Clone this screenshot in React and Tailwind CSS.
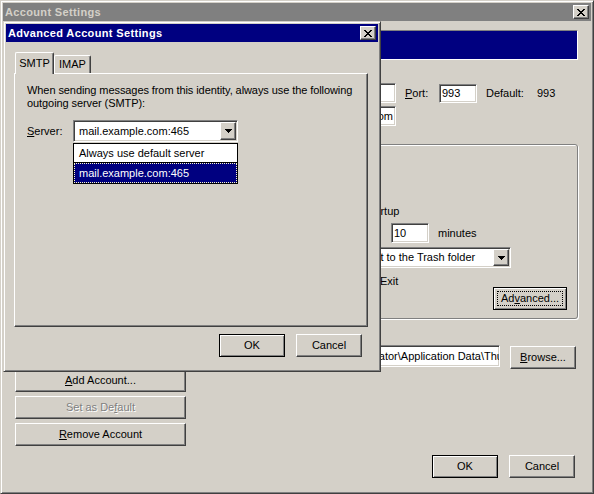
import React from 'react'

// classic win2k bevels
const raised =
  'border border-t-white border-l-white border-r-[#404040] border-b-[#404040] shadow-[inset_-1px_-1px_0_#808080,inset_1px_1px_0_#d4d0c8]'
const sunken =
  'border border-t-[#808080] border-l-[#808080] border-r-white border-b-white shadow-[inset_1px_1px_0_#404040,inset_-1px_-1px_0_#d4d0c8]'
const frame =
  'border border-t-[#d4d0c8] border-l-[#d4d0c8] border-r-[#404040] border-b-[#404040] shadow-[inset_1px_1px_0_#fff,inset_-1px_-1px_0_#808080]'

function XGlyph() {
  const px = [
    [0, 0, 2], [6, 0, 2],
    [1, 1, 2], [5, 1, 2],
    [2, 2, 4],
    [3, 3, 2],
    [2, 4, 4],
    [1, 5, 2], [5, 5, 2],
    [0, 6, 2], [6, 6, 2],
  ]
  return (
    <svg width="8" height="7" viewBox="0 0 8 7" shapeRendering="crispEdges">
      {px.map(([x, y, w], i) => (
        <rect key={i} x={x} y={y} width={w} height="1" fill="#000" />
      ))}
    </svg>
  )
}

function ArrowGlyph() {
  return (
    <svg width="7" height="4" viewBox="0 0 7 4" shapeRendering="crispEdges">
      <rect x="0" y="0" width="7" height="1" fill="#000" />
      <rect x="1" y="1" width="5" height="1" fill="#000" />
      <rect x="2" y="2" width="3" height="1" fill="#000" />
      <rect x="3" y="3" width="1" height="1" fill="#000" />
    </svg>
  )
}

function CaptionX() {
  return (
    <div className={`flex h-[14px] w-[16px] items-center justify-center bg-[#d4d0c8] ${raised}`}>
      <XGlyph />
    </div>
  )
}

function Btn({ children, def, focus, disabled, className = '' }) {
  const bevel = def
    ? 'border border-black shadow-[inset_1px_1px_0_#fff,inset_-1px_-1px_0_#808080]'
    : raised
  return (
    <div
      className={`relative flex h-[23px] shrink-0 items-center justify-center bg-[#d4d0c8] ${bevel} ${
        disabled ? 'text-[#808080] [text-shadow:1px_1px_0_#fff]' : ''
      } ${className}`}
    >
      {focus && <span className="pointer-events-none absolute inset-[3px] border border-dotted border-black" />}
      {children}
    </div>
  )
}

function Field({ children, className = '', right }) {
  return (
    <div
      className={`flex shrink-0 items-center overflow-hidden whitespace-nowrap bg-white ${
        right ? 'justify-end pr-[2px]' : 'pl-[2px]'
      } ${sunken} ${className}`}
    >
      {children}
    </div>
  )
}

function Combo({ children, className = '', textClass = 'pl-[4px]' }) {
  return (
    <div className={`flex shrink-0 items-stretch bg-white p-[1px] ${sunken} ${className}`}>
      <span className={`flex flex-1 items-center overflow-hidden whitespace-nowrap ${textClass}`}>{children}</span>
      <div className={`flex w-[16px] items-center justify-center bg-[#d4d0c8] ${raised}`}>
        <ArrowGlyph />
      </div>
    </div>
  )
}

function Check({ checked }) {
  return (
    <div className={`mr-[5px] flex h-[13px] w-[13px] shrink-0 items-center justify-center bg-white ${sunken}`}>
      {checked && (
        <svg width="7" height="7" viewBox="0 0 7 7">
          <path d="M0 3 L2 5 L7 0 L7 2 L2 7 L0 5 Z" fill="#000" />
        </svg>
      )}
    </div>
  )
}

const U = ({ children }) => <span className="underline underline-offset-1">{children}</span>

export default function App() {
  return (
    <div className="relative h-[494px] w-[594px] select-none overflow-hidden bg-[#d4d0c8] font-['Liberation_Sans',Arial,sans-serif] text-[11px] leading-[13px] text-black">
      {/* background window */}
      <div className={`flex h-full flex-col p-[2px] ${frame}`}>
        <div className="flex h-[18px] items-center justify-between bg-[#808080] px-[2px]">
          <span className="font-bold tracking-[0.35px] text-[#d4d0c8]">Account Settings</span>
          <CaptionX />
        </div>

        <div className="flex flex-col pl-[12px] pr-[13px] pt-[9px]">
          <div className="flex">
            {/* account list + buttons */}
            <div className="flex w-[171px] shrink-0 flex-col">
              <div className={`h-[335px] bg-white ${sunken}`} />
              <div className="mt-[4px] flex flex-col gap-[4px]">
                <Btn>
                  <span><U>A</U>dd Account...</span>
                </Btn>
                <Btn disabled>
                  <span>Set as De<U>f</U>ault</span>
                </Btn>
                <Btn>
                  <span><U>R</U>emove Account</span>
                </Btn>
              </div>
            </div>

            {/* settings page (left part sits under the dialog) */}
            <div className="ml-[10px] flex w-[382px] flex-col">
              <div className="h-[30px] border border-t-[#808080] border-l-[#808080] border-r-white border-b-white bg-[#000080]" />

              <div className="mt-[23px] flex h-[20px] items-center">
                <span className="w-[74px] shrink-0" />
                <Field className="h-[20px] w-[126px]" />
                <span className="ml-[9px] w-[34px] shrink-0"><U>P</U>ort:</span>
                <Field className="h-[19px] w-[38px]">993</Field>
                <span className="ml-[9px] w-[51px] shrink-0">Default:</span>
                <span>993</span>
              </div>

              <div className="mt-[3px] flex h-[20px] items-center">
                <span className="w-[74px] shrink-0" />
                <Field right className="h-[20px] w-[126px]">user@example.com</Field>
              </div>

              <div className="mt-[18px] flex flex-col rounded-[3px] border border-[#808080] pb-[8px] pl-[8px] pt-[6px] shadow-[inset_1px_1px_0_#fff,1px_1px_0_#fff]">
                <div className="flex h-[24px] items-center">
                  <Check />
                </div>
                <div className="flex h-[24px] items-center">
                  <Check />
                </div>
                <div className="flex h-[24px] items-center">
                  <Check checked />
                  <span className="whitespace-nowrap pl-[4px]">Check for new messages at startup</span>
                </div>
                <div className="flex h-[20px] items-center">
                  <Check checked />
                  <span className="w-[168px] shrink-0" />
                  <Field className="h-[20px] w-[38px]">10</Field>
                  <span className="ml-[9px]">minutes</span>
                </div>
                <div className="mt-[4px] flex h-[21px] items-center">
                  <span className="w-[141px] shrink-0" />
                  <Combo className="h-[21px] w-[165px]" textClass="pl-0">
                    Move it to the Trash folder
                  </Combo>
                </div>
                <div className="mt-[6px] flex h-[14px] items-center">
                  <Check />
                  <span className="whitespace-nowrap pl-[3px]">Clean up ("Expunge") Inbox on Exit</span>
                </div>
                <div className="-mt-[1px] flex h-[23px] items-center justify-between">
                  <Check />
                  <Btn def focus className="mr-[10px] w-[74px]">
                    <span>Ad<U>v</U>anced...</span>
                  </Btn>
                </div>
              </div>

              <div className="mt-[7px] h-[14px]" />
              <div className="mt-[5px] flex items-start">
                <div className={`flex h-[22px] w-[304px] shrink-0 items-center overflow-hidden whitespace-nowrap bg-white ${sunken}`}>
                  <span className="-ml-[1px]">C:\Documents and Settings\Administrator\Application Data\Thu</span>
                </div>
                <Btn className="ml-[10px] mt-[1px] w-[66px]">
                  <span><U>B</U>rowse...</span>
                </Btn>
              </div>
            </div>
          </div>

          <div className="mt-[9px] flex justify-end gap-[11px] pr-[3px]">
            <Btn def className="w-[66px]">OK</Btn>
            <Btn className="w-[66px]">Cancel</Btn>
          </div>
        </div>
      </div>

      {/* Advanced Account Settings dialog, floating over the window */}
      <div className={`absolute left-[3px] top-[21px] flex h-[351px] w-[378px] flex-col bg-[#d4d0c8] p-[2px] ${frame}`}>
        <div className="flex h-[18px] shrink-0 items-center justify-between bg-[#000080] px-[2px]">
          <span className="font-bold tracking-[0.35px] text-white">Advanced Account Settings</span>
          <CaptionX />
        </div>

        <div className="ml-[9px] mt-[10px] flex h-[21px] items-end">
          <div className="relative z-10 -mb-[1px] flex h-[22px] w-[39px] items-center justify-center rounded-t-[2px] border-l border-r border-t border-l-white border-r-[#404040] border-t-white bg-[#d4d0c8] pb-[1px] shadow-[inset_-1px_0_0_#808080]">
            SMTP
          </div>
          <div className="flex h-[18px] w-[37px] items-center justify-center rounded-t-[2px] border-l border-r border-t border-l-white border-r-[#404040] border-t-white shadow-[inset_-1px_0_0_#808080]">
            IMAP
          </div>
        </div>

        <div className={`ml-[8px] mr-[10px] h-[254px] shrink-0 pl-[12px] pt-[10px] ${raised}`}>
          <p className="whitespace-nowrap tracking-[-0.08px]">
            When sending messages from this identity, always use the following
            <br />
            outgoing server (SMTP):
          </p>
          <div className="mt-[10px] flex h-[22px] items-center">
            <span className="w-[46px] shrink-0"><U>S</U>erver:</span>
            <div className="relative">
              <Combo className="h-[22px] w-[165px]">mail.example.com:465</Combo>
              <div className="absolute left-0 top-[23px] z-20 flex w-[165px] flex-col border border-black bg-white">
                <div className="flex h-[19px] items-center border-b border-black pl-[5px]">Always use default server</div>
                <div className="flex h-[20px] items-center bg-[#000080] pl-[5px] text-white outline-1 -outline-offset-1 outline-dotted outline-[#fffbc8]">
                  mail.example.com:465
                </div>
              </div>
            </div>
          </div>
        </div>

        <div className="mt-[7px] flex justify-end gap-[11px] pr-[16px]">
          <Btn def className="w-[66px]">OK</Btn>
          <Btn className="w-[66px]">Cancel</Btn>
        </div>
      </div>
    </div>
  )
}
